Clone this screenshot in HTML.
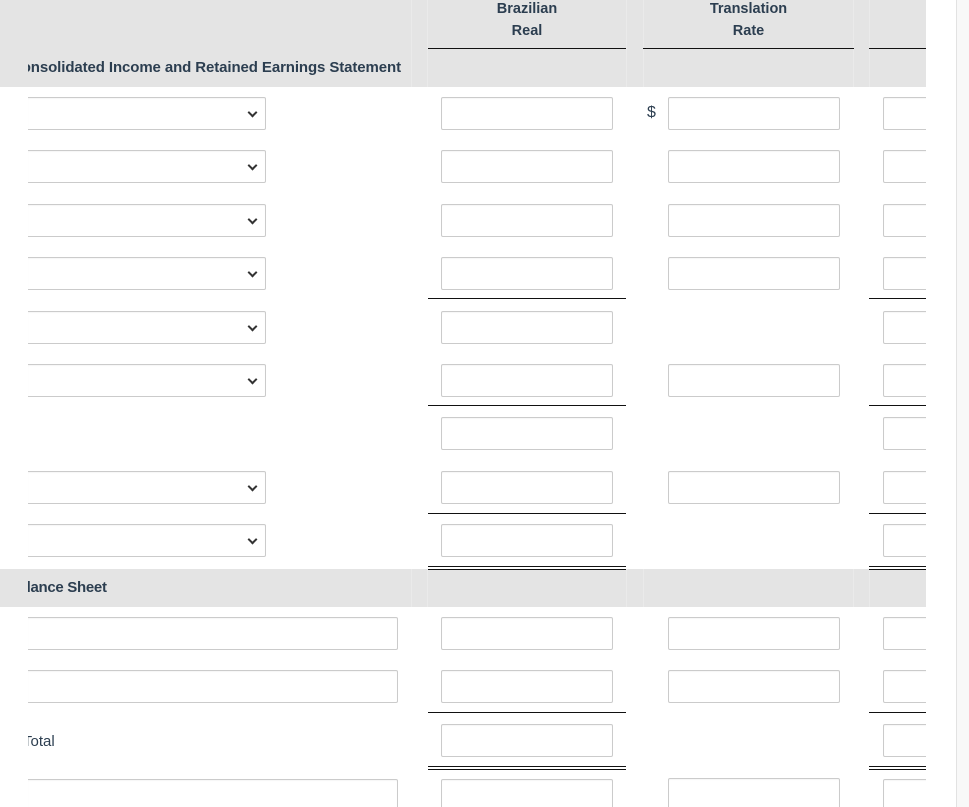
<!DOCTYPE html>
<html><head><meta charset="utf-8"><style>
*{box-sizing:border-box;margin:0;padding:0}
body{width:969px;height:807px;overflow:hidden;background:#fff;font-family:"Liberation Sans",Arial,sans-serif;color:#2c3e50;position:relative}
#w{position:absolute;left:0;top:0;width:926px;height:807px;overflow:hidden}
.g{position:absolute;left:0;width:926px;background:#e4e4e4}
.v{position:absolute;width:1px;background:#eaeaea}
.i{position:absolute;height:33px;background:#fff;border:1px solid #cbcbcb;border-radius:2px;box-shadow:inset 0 1px 1px rgba(0,0,0,.04)}
.s{left:28px;width:238px;border-left:none;border-radius:0 2px 2px 0}
.t{left:28px;width:370px;border-left:none;border-radius:0 2px 2px 0}
.c1{left:441px;width:172px}.c2{left:668px;width:172px}.c3{left:883px;width:60px}
.s:after{content:"";position:absolute;right:9px;top:11px;width:5px;height:5px;border-right:2px solid #333;border-bottom:2px solid #333;transform:rotate(45deg)}
.r{position:absolute;height:0;border-top:1.5px solid #111}
.d{position:absolute;height:4px;border-top:1.5px solid #111;border-bottom:1.5px solid #111}
.h{position:absolute;font-weight:bold;font-size:14.5px;text-align:center;line-height:22px}
.clip{position:absolute;left:28px;overflow:hidden;white-space:nowrap}
#sb{position:absolute;left:956px;top:0;width:13px;height:807px;background:#f8f8f8;border-left:1px solid #e2e2e2}
</style></head><body>
<div id="w">
<div class="g" style="top:0;height:87px"></div>
<div class="g" style="top:569px;height:38px"></div>
<div class="v" style="left:411px;top:0;height:87px"></div><div class="v" style="left:427px;top:0;height:87px"></div>
<div class="v" style="left:626px;top:0;height:87px"></div><div class="v" style="left:643px;top:0;height:87px"></div>
<div class="v" style="left:853px;top:0;height:87px"></div><div class="v" style="left:869px;top:0;height:87px"></div>
<div class="v" style="left:411px;top:569px;height:38px"></div><div class="v" style="left:427px;top:569px;height:38px"></div>
<div class="v" style="left:626px;top:569px;height:38px"></div><div class="v" style="left:643px;top:569px;height:38px"></div>
<div class="v" style="left:853px;top:569px;height:38px"></div><div class="v" style="left:869px;top:569px;height:38px"></div>
<div class="h" style="left:428px;width:198px;top:-2px">Brazilian<br>Real</div>
<div class="h" style="left:643px;width:211px;top:-2px">Translation<br>Rate</div>
<div class="r" style="left:428px;width:198px;top:48px"></div>
<div class="r" style="left:643px;width:211px;top:48px"></div>
<div class="r" style="left:869px;width:60px;top:48px"></div>
<div class="clip" style="top:59px;width:373px;height:22px;font-weight:bold;font-size:15px;letter-spacing:-0.1px"><span style="position:absolute;right:0;top:0">Consolidated Income and Retained Earnings Statement</span></div>
<div class="clip" style="top:579px;width:200px;height:22px;font-weight:bold;font-size:15px;letter-spacing:-0.3px"><span style="position:absolute;left:-20px">Balance Sheet</span></div>
<div class="clip" style="top:733px;width:100px;height:22px;font-size:15px"><span style="position:absolute;left:-5px">Total</span></div>
<div style="position:absolute;left:647px;top:104px;font-size:16px">$</div>

<div class="i s" style="top:97px"></div><div class="i c1" style="top:97px"></div><div class="i c2" style="top:97px"></div><div class="i c3" style="top:97px"></div>
<div class="i s" style="top:150px"></div><div class="i c1" style="top:150px"></div><div class="i c2" style="top:150px"></div><div class="i c3" style="top:150px"></div>
<div class="i s" style="top:204px"></div><div class="i c1" style="top:204px"></div><div class="i c2" style="top:204px"></div><div class="i c3" style="top:204px"></div>
<div class="i s" style="top:257px"></div><div class="i c1" style="top:257px"></div><div class="i c2" style="top:257px"></div><div class="i c3" style="top:257px"></div>
<div class="r" style="left:428px;width:198px;top:298px"></div><div class="r" style="left:869px;width:60px;top:298px"></div>
<div class="i s" style="top:311px"></div><div class="i c1" style="top:311px"></div><div class="i c3" style="top:311px"></div>
<div class="i s" style="top:364px"></div><div class="i c1" style="top:364px"></div><div class="i c2" style="top:364px"></div><div class="i c3" style="top:364px"></div>
<div class="r" style="left:428px;width:198px;top:405px"></div><div class="r" style="left:869px;width:60px;top:405px"></div>
<div class="i c1" style="top:417px"></div><div class="i c3" style="top:417px"></div>
<div class="i s" style="top:471px"></div><div class="i c1" style="top:471px"></div><div class="i c2" style="top:471px"></div><div class="i c3" style="top:471px"></div>
<div class="r" style="left:428px;width:198px;top:513px"></div><div class="r" style="left:869px;width:60px;top:513px"></div>
<div class="i s" style="top:524px"></div><div class="i c1" style="top:524px"></div><div class="i c3" style="top:524px"></div>
<div class="d" style="left:428px;width:198px;top:566px"></div><div class="d" style="left:869px;width:60px;top:566px"></div>
<div class="i t" style="top:617px"></div><div class="i c1" style="top:617px"></div><div class="i c2" style="top:617px"></div><div class="i c3" style="top:617px"></div>
<div class="i t" style="top:670px"></div><div class="i c1" style="top:670px"></div><div class="i c2" style="top:670px"></div><div class="i c3" style="top:670px"></div>
<div class="r" style="left:428px;width:198px;top:712px"></div><div class="r" style="left:869px;width:60px;top:712px"></div>
<div class="i c1" style="top:724px"></div><div class="i c3" style="top:724px"></div>
<div class="d" style="left:428px;width:198px;top:766px"></div><div class="d" style="left:869px;width:60px;top:766px"></div>
<div class="i t" style="top:779px"></div><div class="i c1" style="top:779px"></div><div class="i c2" style="top:778px"></div><div class="i c3" style="top:779px"></div>
</div>
<div id="sb"></div>
</body></html>
